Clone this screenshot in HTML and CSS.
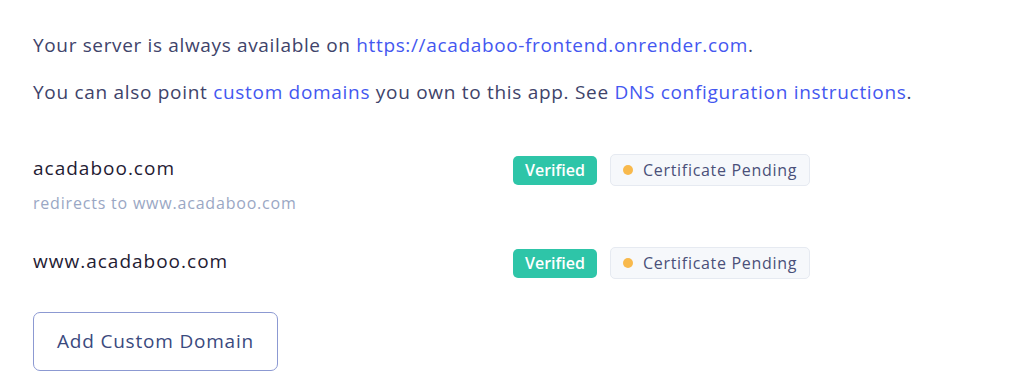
FILE: index.html
```html
<!DOCTYPE html>
<html lang="en">
<head>
    <meta charset="UTF-8">
    <meta name="viewport" content="width=device-width, initial-scale=1.0">
    <title>Custom Domains</title>
    <link rel="stylesheet" href="styles.css">
</head>
<body>

    <div class="container">
        <p class="intro">Your server is always available on <a href="#">https://acadaboo-frontend.onrender.com</a>.</p>
        <p class="intro">You can also point <a href="#">custom domains</a> you own to this app. See <a href="#">DNS configuration instructions</a>.</p>

        <ul class="domain-list">
            <li class="domain-item">
                <div class="domain-name">
                    <div class="name">acadaboo.com</div>
                    <div class="redirect">redirects to www.acadaboo.com</div>
                </div>
                <div class="badges">
                    <span class="verified">Verified</span>
                    <span class="pending"><span class="dot"></span>Certificate Pending</span>
                </div>
            </li>
            <li class="domain-item">
                <div class="domain-name">
                    <div class="name">www.acadaboo.com</div>
                </div>
                <div class="badges">
                    <span class="verified">Verified</span>
                    <span class="pending"><span class="dot"></span>Certificate Pending</span>
                </div>
            </li>
        </ul>

        <button class="add-domain">Add Custom Domain</button>
    </div>

</body>
</html>
```

FILE: styles.css
```css
body {
    font-family: "Open Sans", Lato, sans-serif;
    background-color: #fff;
    color: #40436a;
    margin: 0;
    padding: 0;
}

.container {
    padding: 31px 33px 0;
}

.intro {
    font-size: 19px;
    line-height: 28px;
    letter-spacing: 0.65px;
    margin: 0 0 18px;
}

.intro + .intro {
    margin-top: 19px;
    letter-spacing: 0.7px;
}

.intro a {
    color: #4457f0;
    text-decoration: none;
}

.domain-list {
    list-style-type: none;
    padding: 0;
    margin: 48px 0 0;
}

.domain-item {
    display: flex;
    align-items: flex-start;
    margin-bottom: 33px;
}

.domain-name {
    width: 480px;
}

.domain-item .name {
    font-size: 19px;
    line-height: 28px;
    letter-spacing: 1px;
    color: #1f2033;
}

.domain-item .redirect {
    font-size: 16px;
    line-height: 22px;
    letter-spacing: 0.8px;
    margin-top: 10px;
    color: #9aa7c4;
}

.badges {
    display: flex;
    align-items: center;
    gap: 13px;
}

.verified {
    background-color: #2ec5a8;
    color: #fff;
    font-size: 16px;
    font-weight: 600;
    line-height: 21px;
    padding: 4px 12px;
    border-radius: 5px;
}

.pending {
    display: flex;
    align-items: center;
    background-color: #f6f8fb;
    border: 1px solid #e6eaf1;
    border-radius: 5px;
    color: #4a5079;
    font-size: 16px;
    line-height: 22px;
    letter-spacing: 0.7px;
    padding: 4px 12px;
}

.pending .dot {
    width: 10px;
    height: 10px;
    border-radius: 50%;
    background-color: #f8b94c;
    margin-right: 10px;
}

.add-domain {
    font-family: inherit;
    font-size: 19px;
    line-height: 26px;
    letter-spacing: 0.8px;
    color: #3a4a7e;
    background-color: #fff;
    border: 1px solid #8c99d2;
    border-radius: 7px;
    padding: 15px 23px 16px;
    cursor: pointer;
}
```
